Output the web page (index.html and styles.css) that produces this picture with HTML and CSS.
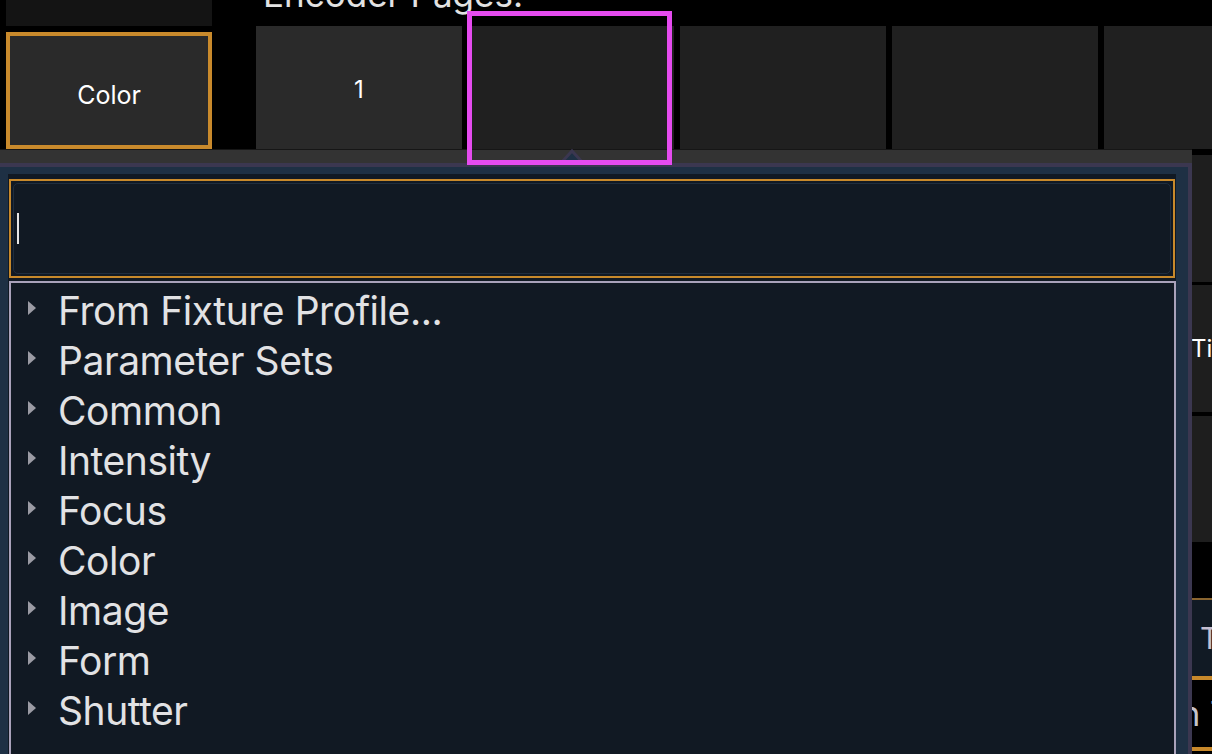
FILE: index.html
```html
<!DOCTYPE html>
<html>
<head>
<meta charset="utf-8">
<link rel="stylesheet" href="styles.css">
</head>
<body>
<div class="page">
  <div class="grid">
    <div class="left-col">
      <div class="tile dim"></div>
      <div class="tile color-btn">Color</div>
    </div>
    <div class="enc">
      <div class="enc-title">Encoder Pages:</div>
      <div class="enc-row">
        <div class="enc-btn first">1</div>
        <div class="enc-btn"></div>
        <div class="enc-btn"></div>
        <div class="enc-btn"></div>
        <div class="enc-btn"></div>
      </div>
    </div>
    <div class="side">
      <div class="side-tile t1"></div>
      <div class="side-tile t2">Timing</div>
      <div class="side-tile t3"></div>
      <div class="side-panel">Type</div>
      <div class="side-text">Function Type</div>
      <div class="side-bar"></div>
    </div>
  </div>

  <div class="popup">
    <div class="pop-head"></div>
    <div class="pop-body">
      <div class="pop-inner">
        <div class="search">
          <div class="search-field"><span class="cursor"></span></div>
        </div>
        <ul class="list">
          <li class="item"><span class="tri"></span><span class="label">From Fixture Profile...</span></li>
          <li class="item"><span class="tri"></span><span class="label">Parameter Sets</span></li>
          <li class="item"><span class="tri"></span><span class="label">Common</span></li>
          <li class="item"><span class="tri"></span><span class="label">Intensity</span></li>
          <li class="item"><span class="tri"></span><span class="label">Focus</span></li>
          <li class="item"><span class="tri"></span><span class="label">Color</span></li>
          <li class="item"><span class="tri"></span><span class="label">Image</span></li>
          <li class="item"><span class="tri"></span><span class="label">Form</span></li>
          <li class="item"><span class="tri"></span><span class="label">Shutter</span></li>
        </ul>
      </div>
    </div>
  </div>

  <svg class="caret" width="28" height="18" viewBox="0 0 28 18">
    <polygon points="2,16 14,3 26,16" fill="#1e3044" stroke="#3b3750" stroke-width="3" stroke-linejoin="miter"/>
  </svg>

  <div class="highlight"></div>
</div>
</body>
</html>
```

FILE: styles.css
```css
* { box-sizing: border-box; }

html, body {
  margin: 0;
  padding: 0;
  background: #000;
  width: 1212px;
  height: 754px;
  overflow: hidden;
  font-family: Inter, "Noto Sans", "Liberation Sans", sans-serif;
}

.page {
  position: relative;
  width: 1212px;
  height: 754px;
  overflow: hidden;
}

.grid {
  display: grid;
  grid-template-columns: 206px 32px repeat(5, 206px);
  column-gap: 6px;
  padding-left: 6px;
  width: max-content;
}

.left-col {
  grid-column: 1;
  grid-row: 1;
  display: flex;
  flex-direction: column;
  gap: 6px;
}

.tile.dim {
  height: 26px;
  background: #141414;
}

.tile.color-btn {
  height: 117px;
  background: #2a2a2a;
  border: 4px solid #c98a2c;
  color: #fff;
  font-size: 25px;
  display: flex;
  align-items: center;
  justify-content: center;
  padding-top: 9px;
}

.enc {
  grid-column: 3 / span 5;
  grid-row: 1;
  display: flex;
  flex-direction: column;
}

.enc-title {
  height: 45px;
  margin-top: -19px;
  line-height: 26px;
  font-size: 35px;
  color: #e2e2e2;
  padding-left: 7px;
  white-space: nowrap;
}

.enc-row {
  display: flex;
  gap: 6px;
  height: 123px;
}

.enc-btn {
  width: 206px;
  flex: none;
  background: #202020;
  color: #fff;
  font-size: 24px;
  display: flex;
  align-items: center;
  justify-content: center;
}

.enc-btn.first {
  background: #2a2a2a;
  padding-top: 3px;
}

.side {
  grid-column: 7;
  grid-row: 2;
  display: flex;
  flex-direction: column;
}

.side-tile {
  background: #1e1e1e;
  color: #fff;
  font-size: 24px;
  display: flex;
  align-items: center;
  padding-left: 87px;
  white-space: nowrap;
  overflow: hidden;
}

.side-tile.t1 { margin-top: 6px; height: 127px; }
.side-tile.t2 { margin-top: 3px; height: 127px; }
.side-tile.t3 { margin-top: 4px; height: 126px; }

.side-panel {
  margin-top: 56px;
  height: 82px;
  background: #111a24;
  border-top: 2px solid #8a6530;
  border-bottom: 4px solid #c8892b;
  color: #c6c0d2;
  font-size: 30px;
  display: flex;
  align-items: center;
  padding-left: 96px;
  white-space: nowrap;
}

.side-text {
  height: 67px;
  color: #c4c4cc;
  font-size: 34px;
  display: flex;
  align-items: center;
  margin-left: -42px;
  white-space: nowrap;
}

.side-bar {
  height: 4px;
  background: #c8892b;
}

/* Popup overlay */
.popup {
  position: absolute;
  left: 0;
  top: 149px;
  width: 1192px;
  bottom: 0;
  display: flex;
  flex-direction: column;
}

.pop-head {
  height: 14px;
  background: #333333;
  border-top: 1px solid #161616;
  flex: none;
}

.pop-body {
  flex: 1;
  background: #1e3044;
  border-top: 4px solid #3b3750;
  border-right: 4px solid #3b3750;
  padding: 7px 12px 0 8px;
  display: flex;
  flex-direction: column;
}

.pop-inner {
  flex: 1;
  background: #111923;
  padding: 5px 0 0 1px;
  display: flex;
  flex-direction: column;
}

.search {
  height: 99px;
  margin-right: 1px;
  border: 2px solid #c8892b;
  padding: 2px;
  flex: none;
}

.search-field {
  height: 100%;
  border: 1px solid #1f2d3e;
  border-radius: 5px;
  display: flex;
  align-items: center;
  padding-left: 3px;
}

.cursor {
  display: block;
  width: 2px;
  height: 31px;
  background: #e6e6e6;
}

.list {
  flex: 1;
  list-style: none;
  margin: 3px 0 0 0;
  padding: 2px 0 0 0;
  border: 2px solid #a9a2ba;
  border-bottom: none;
}

.item {
  height: 50px;
  display: flex;
  align-items: center;
  padding-left: 17px;
  gap: 23px;
}

.tri {
  width: 0;
  height: 0;
  border-left: 8px solid #9b9ba4;
  border-top: 7px solid transparent;
  border-bottom: 7px solid transparent;
  margin-bottom: 4px;
  flex: none;
}

.label {
  font-size: 39px;
  color: #e2e2e4;
  white-space: nowrap;
  letter-spacing: -0.45px;
  margin-left: -1px;
}

.caret {
  position: absolute;
  left: 558px;
  top: 148px;
}

.highlight {
  position: absolute;
  left: 467px;
  top: 11px;
  width: 205px;
  height: 154px;
  border: 5px solid #e54bef;
}
```
